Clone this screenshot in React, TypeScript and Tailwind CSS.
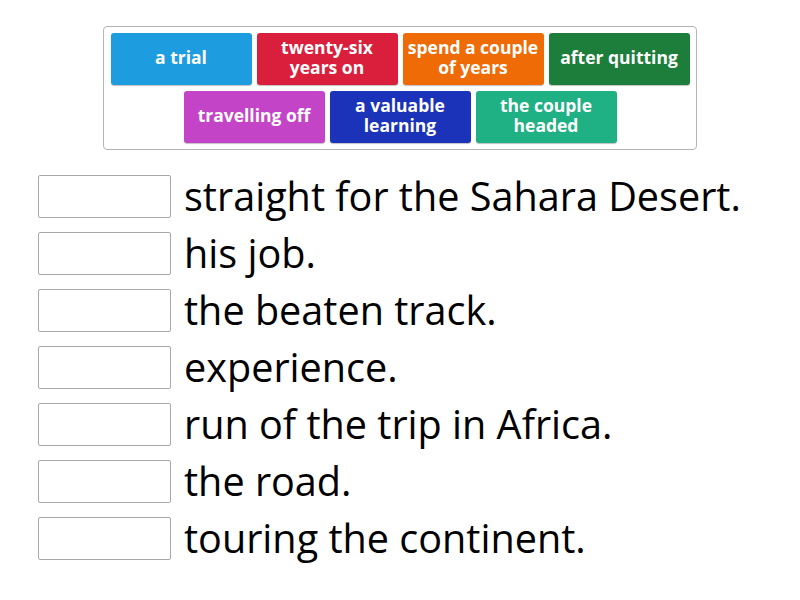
const TILES_ROW1 = [
  { label: "a trial", color: "bg-[#1d9de0]" },
  { label: "twenty-six years on", color: "bg-[#d91f3b]" },
  { label: "spend a couple of years", color: "bg-[#ef6b05]" },
  { label: "after quitting", color: "bg-[#1c7e3a]" },
];

const TILES_ROW2 = [
  { label: "travelling off", color: "bg-[#c444c8]" },
  { label: "a valuable learning", color: "bg-[#1a33b8]" },
  { label: "the couple headed", color: "bg-[#1fb084]" },
];

const SENTENCES = [
  "straight for the Sahara Desert.",
  "his job.",
  "the beaten track.",
  "experience.",
  "run of the trip in Africa.",
  "the road.",
  "touring the continent.",
];

const font = { fontFamily: "'Open Sans', sans-serif" };

function Tile({ label, color }: { label: string; color: string }) {
  return (
    <div
      className={`${color} w-[141px] h-[52px] rounded-[3px] shadow-[0_1px_1px_rgba(0,0,0,0.25)] flex items-center justify-center text-center px-[14px] pb-[4px] text-white font-bold text-[17.5px] leading-[20px]`}
    >
      <span className="-mx-[14px]">{label}</span>
    </div>
  );
}

export default function App() {
  return (
    <div className="w-[800px] h-[600px] bg-white" style={font}>
      <div className="pt-[26px] flex justify-center">
        <div className="w-[594px] border border-[#b5b5b5] rounded-[4px] p-[6px] flex flex-col items-center gap-[6px]">
          <div className="flex gap-[5px]">
            {TILES_ROW1.map((t) => (
              <Tile key={t.label} {...t} />
            ))}
          </div>
          <div className="flex gap-[5px]">
            {TILES_ROW2.map((t) => (
              <Tile key={t.label} {...t} />
            ))}
          </div>
        </div>
      </div>

      <div className="pl-[38px] pt-[25px] flex flex-col gap-[14px]">
        {SENTENCES.map((s) => (
          <div key={s} className="flex items-center gap-[13px] h-[43px]">
            <div className="w-[133px] h-[43px] border border-[#a8a8a8] rounded-[2px] bg-white shrink-0" />
            <span className="text-[39.6px] text-black leading-none whitespace-nowrap">{s}</span>
          </div>
        ))}
      </div>
    </div>
  );
}
